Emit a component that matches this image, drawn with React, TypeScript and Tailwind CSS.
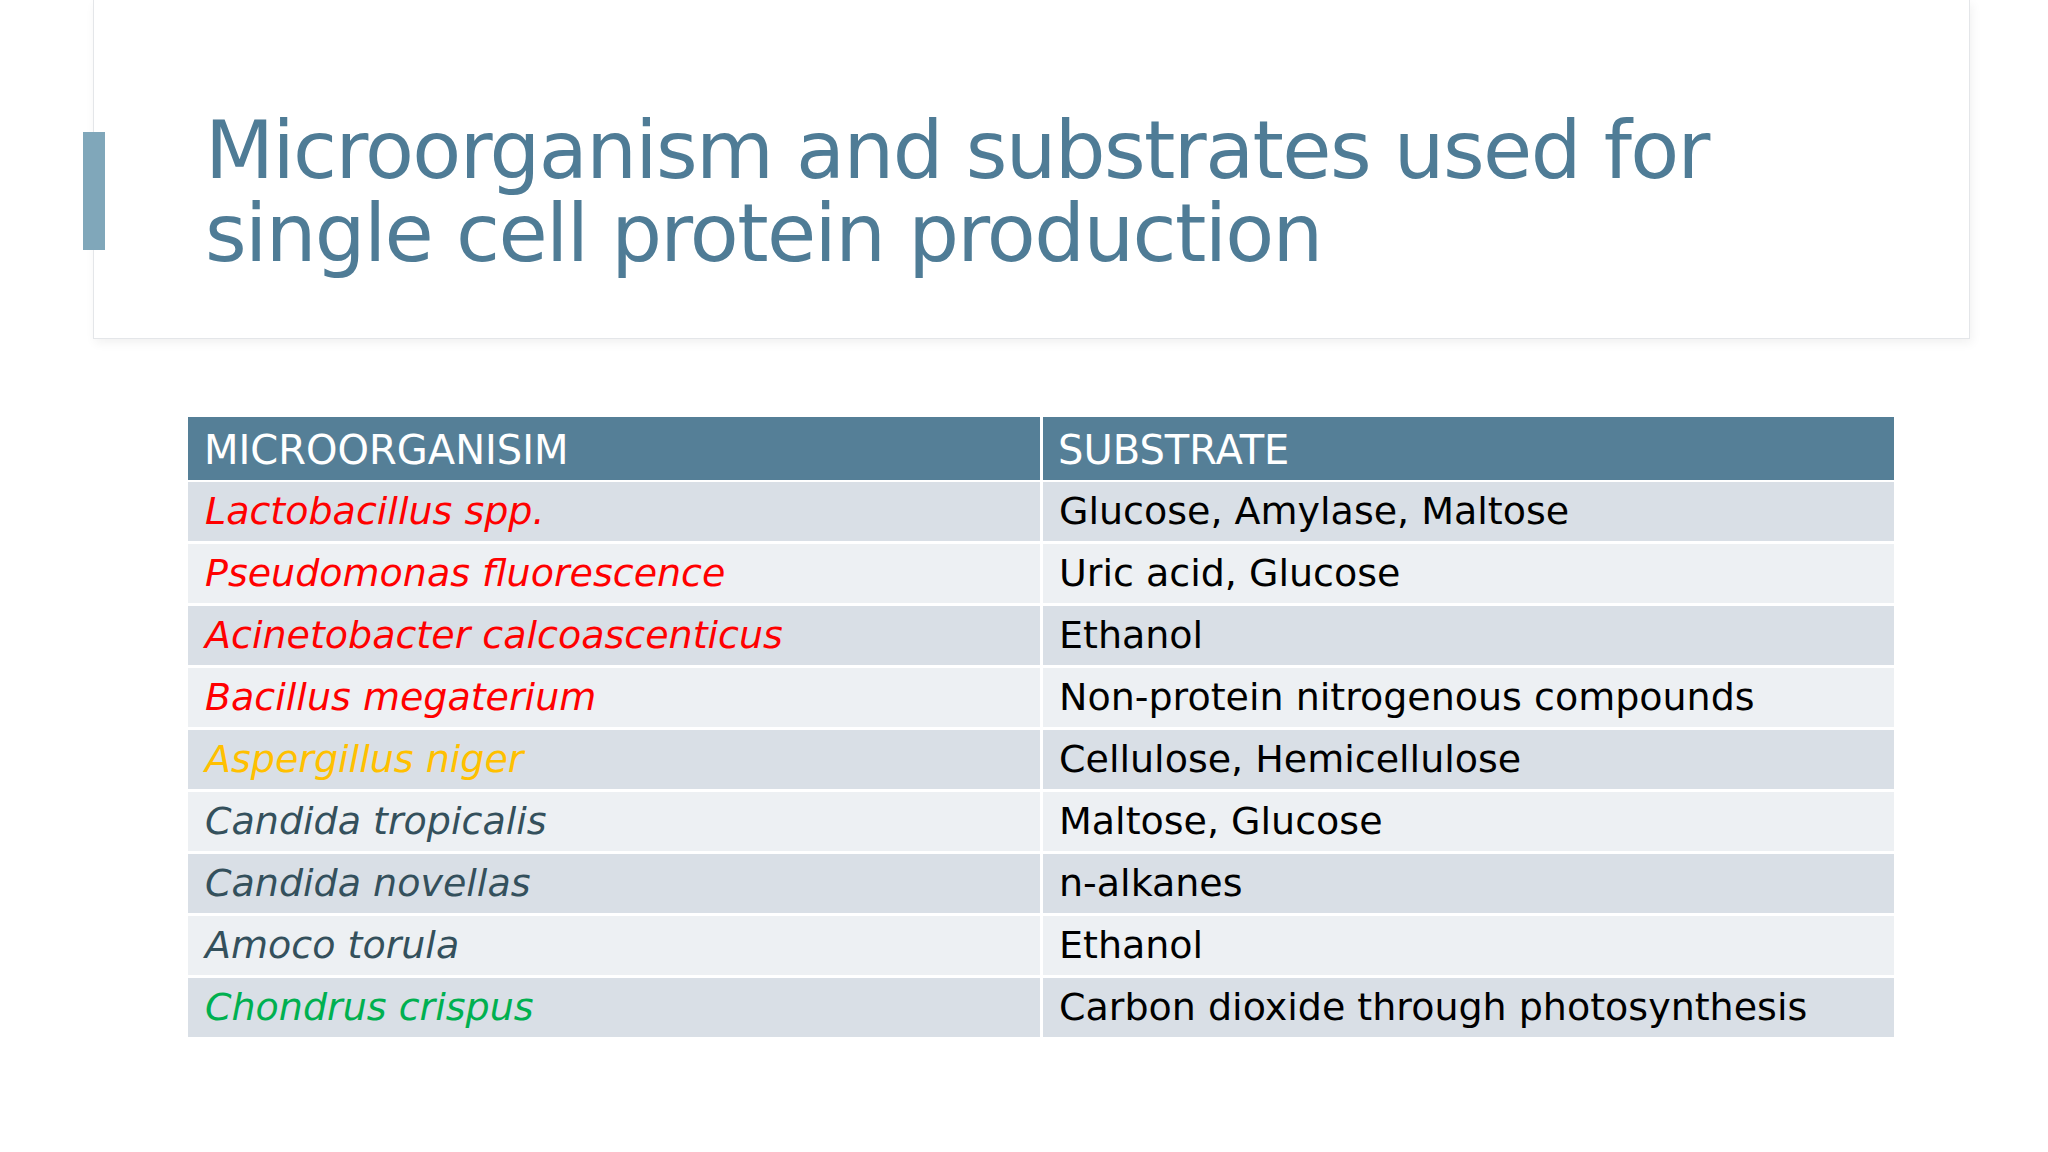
const ROWS = [
  { name: "Lactobacillus spp.", color: "text-[#ff0000]", substrate: "Glucose, Amylase, Maltose" },
  { name: "Pseudomonas fluorescence", color: "text-[#ff0000]", substrate: "Uric acid, Glucose" },
  { name: "Acinetobacter calcoascenticus", color: "text-[#ff0000]", substrate: "Ethanol" },
  { name: "Bacillus megaterium", color: "text-[#ff0000]", substrate: "Non-protein nitrogenous compounds" },
  { name: "Aspergillus niger", color: "text-[#ffc000]", substrate: "Cellulose, Hemicellulose" },
  { name: "Candida tropicalis", color: "text-[#34505c]", substrate: "Maltose, Glucose" },
  { name: "Candida novellas", color: "text-[#34505c]", substrate: "n-alkanes" },
  { name: "Amoco torula", color: "text-[#34505c]", substrate: "Ethanol" },
  { name: "Chondrus crispus", color: "text-[#00b050]", substrate: "Carbon dioxide through photosynthesis" },
];

const App = () => {
  return (
    <div className="w-[2048px] h-[1152px] overflow-hidden bg-white font-['DejaVu_Sans',sans-serif]">
      {/* title card */}
      <div className="ml-[93px] w-[1877px] h-[339px] bg-white border-x border-b border-[#e4e6e9] shadow-[2px_4px_10px_rgba(0,0,0,0.06)] flex items-start">
        <div className="-ml-[11px] mt-[132px] w-[22px] h-[118px] bg-[#80a7ba] shrink-0" />
        <h1 className="ml-[100px] mt-[109px] text-[80px] leading-[83px] tracking-[-1.6px] text-[#4f7c96] font-normal">
          Microorganism and substrates used for
          <br />
          single cell protein production
        </h1>
      </div>

      {/* table */}
      <div className="ml-[188px] mt-[78px] w-[1706px] flex flex-col">
        <div className="grid grid-cols-[852px_851px] gap-x-[3px] h-[58px] mb-[7px] text-white text-[40px]">
          <div className="bg-[#557f97] flex items-center pl-[16px] pt-[3px]">MICROORGANISIM</div>
          <div className="bg-[#557f97] flex items-center pl-[15px] pt-[3px]">SUBSTRATE</div>
        </div>
        <div className="flex flex-col gap-y-[3px]">
          {ROWS.map((row, i) => {
            const bg = i % 2 === 0 ? "bg-[#d9dfe6]" : "bg-[#edf0f3]";
            return (
              <div key={row.name} className="grid grid-cols-[852px_851px] gap-x-[3px] h-[59px] text-[38px]">
                <div className={`${bg} flex items-center pl-[17px] italic ${row.color}`}>{row.name}</div>
                <div className={`${bg} flex items-center pl-[16px] text-black`}>{row.substrate}</div>
              </div>
            );
          })}
        </div>
      </div>
    </div>
  );
};

export default App;
